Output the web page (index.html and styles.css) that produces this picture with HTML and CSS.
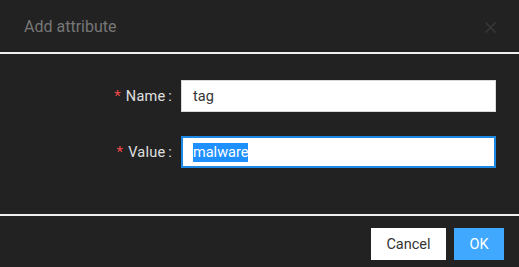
FILE: index.html
```html
<!DOCTYPE html>
<html>
<head>
<meta charset="utf-8">
<link rel="stylesheet" href="styles.css">
</head>
<body>
<div class="modal">
  <div class="header">
    <div class="title">Add attribute</div>
    <svg class="close" width="13" height="13" viewBox="0 0 13 13"><path d="M1.5 1.5L11.5 11.5M11.5 1.5L1.5 11.5" stroke="#383838" stroke-width="1.6" fill="none"/></svg>
  </div>
  <div class="body">
    <div class="row">
      <label class="label"><span class="req">*</span>Name<span class="colon">:</span></label>
      <div class="input">tag</div>
    </div>
    <div class="row">
      <label class="label"><span class="req">*</span>Value<span class="colon">:</span></label>
      <div class="input focused"><span class="sel">malware</span></div>
    </div>
  </div>
  <div class="footer">
    <button class="btn cancel">Cancel</button>
    <button class="btn ok">OK</button>
  </div>
</div>
</body>
</html>
```
FILE: styles.css
```css
html, body { margin: 0; padding: 0; }
body {
  background: #222222;
  width: 519px;
  height: 267px;
  font-family: Roboto, "Liberation Sans", sans-serif;
  overflow: hidden;
}
.modal { display: flex; flex-direction: column; height: 267px; }
.header {
  height: 54px;
  box-sizing: border-box;
  display: flex;
  align-items: center;
  justify-content: space-between;
  padding: 0 22px 0 24px;
  border-bottom: 2px solid #f0f0f0;
}
.title { font-size: 16px; color: #777; }
.close { margin-top: 2px; }
.body {
  height: 160px;
  box-sizing: border-box;
  padding-top: 26px;
  display: flex;
  flex-direction: column;
  gap: 24px;
}
.row { display: flex; align-items: center; }
.label {
  width: 181px;
  box-sizing: border-box;
  padding-right: 9px;
  text-align: right;
  font-size: 14.5px;
  color: #e0e0e0;
  letter-spacing: 0.2px;
}
.req { color: #f04848; margin-right: 5px; font-size: 15px; }
.colon { margin-left: 3px; }
.input {
  width: 315px;
  height: 32px;
  box-sizing: border-box;
  background: #fff;
  border: 1px solid #d9d9d9;
  padding: 0 11px;
  display: flex;
  align-items: center;
  font-size: 14.5px;
  color: #333;
}
.input.focused { border: 2px solid #1e88e5; padding-left: 10px; }
.sel { background: #1e90ff; color: #fff; padding: 1px 0; }
.footer {
  flex: 1;
  border-top: 2px solid #f0f0f0;
  display: flex;
  justify-content: flex-end;
  align-items: flex-start;
  padding: 12px 15px 0 0;
  gap: 8px;
}
.btn {
  height: 32px;
  border: none;
  font-family: Roboto, "Liberation Sans", sans-serif;
  font-size: 14.5px;
  padding: 0 15px;
  cursor: pointer;
}
.cancel { background: #fff; color: #333; width: 75px; }
.ok { background: #40a9ff; color: #fff; width: 50px; }
```
